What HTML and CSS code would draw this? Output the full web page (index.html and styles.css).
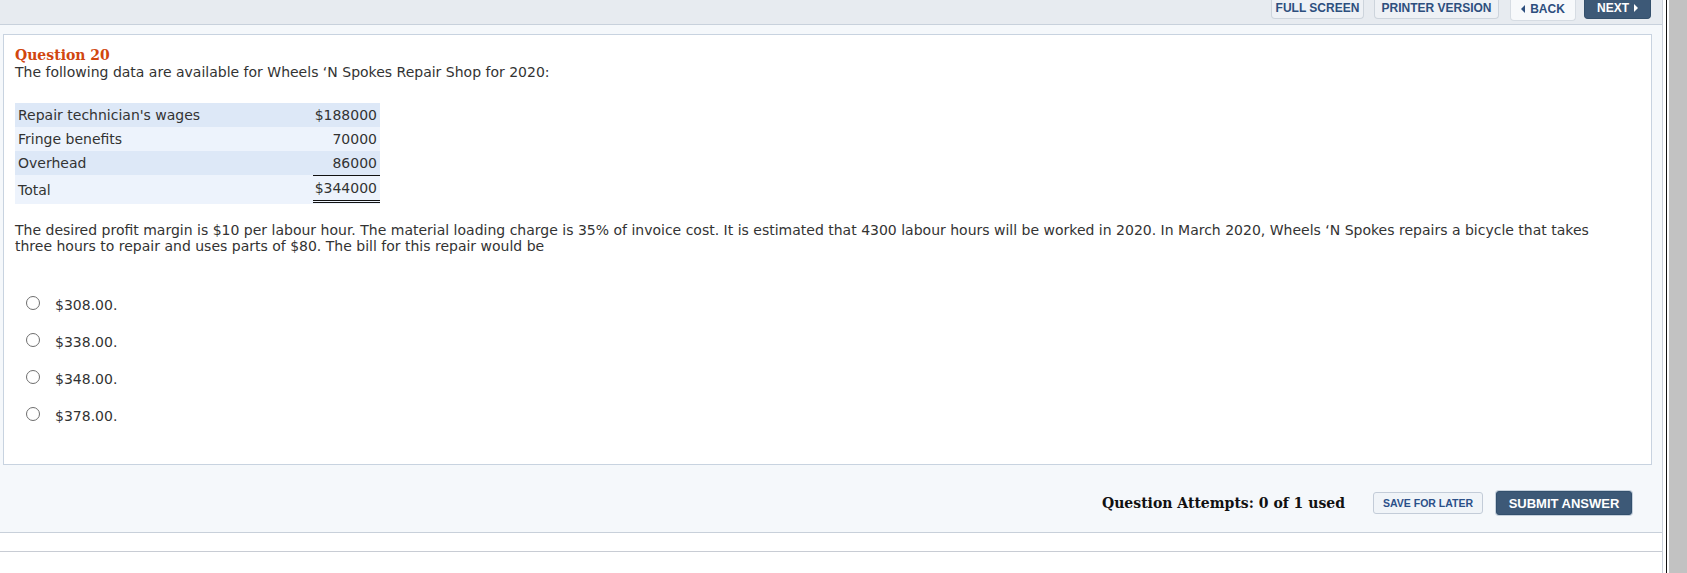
FILE: index.html
```html
<!DOCTYPE html>
<html lang="en">
<head>
<meta charset="utf-8">
<title>Question 20</title>
<link rel="stylesheet" href="styles.css">
</head>
<body>
<div class="page">
  <div class="main">
    <div class="topbar">
      <button class="tbtn full">FULL SCREEN</button>
      <button class="tbtn printer">PRINTER VERSION</button>
      <button class="tbtn back"><svg class="tri" width="4" height="8" viewBox="0 0 4 8"><path d="M4 0 L0 4 L4 8 Z" fill="#2d4f7e"/></svg>BACK</button>
      <button class="tbtn next">NEXT<svg class="tri" width="4" height="8" viewBox="0 0 4 8"><path d="M0 0 L4 4 L0 8 Z" fill="#ffffff"/></svg></button>
    </div>
    <div class="stage">
      <div class="panel">
        <h2 class="qtitle">Question 20</h2>
        <p class="intro">The following data are available for Wheels ‘N Spokes Repair Shop for 2020:</p>
        <table class="data">
          <tr class="odd"><td class="lbl">Repair technician's wages</td><td class="val">$188000</td></tr>
          <tr class="even"><td class="lbl">Fringe benefits</td><td class="val">70000</td></tr>
          <tr class="odd"><td class="lbl">Overhead</td><td class="val">86000</td></tr>
          <tr class="even total"><td class="lbl">Total</td><td class="val"><div class="sum">$344000</div></td></tr>
        </table>
        <p class="problem">The desired profit margin is $10 per labour hour. The material loading charge is 35% of invoice cost. It is estimated that 4300 labour hours will be worked in 2020. In March 2020, Wheels ‘N Spokes repairs a bicycle that takes three hours to repair and uses parts of $80. The bill for this repair would be</p>
        <ul class="options">
          <li class="opt"><span class="radio"></span><span class="otext">$308.00.</span></li>
          <li class="opt"><span class="radio"></span><span class="otext">$338.00.</span></li>
          <li class="opt"><span class="radio"></span><span class="otext">$348.00.</span></li>
          <li class="opt"><span class="radio"></span><span class="otext">$378.00.</span></li>
        </ul>
      </div>
    </div>
    <div class="footer">
      <span class="attempts">Question Attempts: 0 of 1 used</span>
      <button class="save">SAVE FOR LATER</button>
      <button class="submit">SUBMIT ANSWER</button>
    </div>
    <div class="strip"></div>
  </div>
  <div class="scroll"></div>
</div>
</body>
</html>
```
FILE: styles.css
```css
* { box-sizing: border-box; }
html, body { margin: 0; padding: 0; background: #ffffff; }
body {
  font-family: "DejaVu Sans", Verdana, sans-serif;
  font-size: 14px;
  color: #333333;
}
.page {
  display: flex;
  height: 573px;
  overflow: hidden;
}
.main {
  width: 1663px;
  border-right: 1px solid #c9d0da;
  display: flex;
  flex-direction: column;
}
.topbar {
  height: 25px;
  background: #e7ebf0;
  border-bottom: 1px solid #c8d1dc;
  display: flex;
  justify-content: flex-end;
  align-items: flex-start;
  padding-right: 11px;
}
.tbtn {
  font-family: "Liberation Sans", Arial, sans-serif;
  font-weight: bold;
  font-size: 12px;
  color: #2d4f7e;
  margin: -1px 0 0 0;
  height: 20px;
  line-height: 18px;
  padding: 0 0 2px 0;
  text-align: center;
  background: #eef1f5;
  border: 1px solid #cdd4dc;
  border-top: none;
  border-radius: 0 0 4px 4px;
  display: flex;
  align-items: center;
  justify-content: center;
  gap: 5px;
}
.full { width: 93px; }
.printer { width: 125px; margin-left: 10px; }
.back {
  width: 66px;
  margin-left: 11px;
  height: 22px;
  background: #f7f9fb;
  border-color: #d6dce3;
}
.next {
  width: 67px;
  margin-left: 8px;
  background: #3d5977;
  border-color: #34506c;
  color: #ffffff;
}
.tri { display: block; }
.stage {
  background: #f5f8fb;
  padding: 9px 10px 0 3px;
}
.panel {
  height: 431px;
  background: #ffffff;
  border: 1px solid #c8d3e0;
  padding: 12px 30px 0 11px;
}
.qtitle {
  margin: 0;
  font-family: "DejaVu Serif", Cambria, serif;
  font-weight: bold;
  font-size: 14px;
  line-height: 17px;
  color: #d1460e;
}
.intro {
  margin: 0;
  line-height: 16px;
}
.data {
  margin-top: 23px;
  border-collapse: collapse;
  width: 365px;
}
.data td {
  padding: 0 3px;
  height: 24px;
  vertical-align: middle;
  line-height: 16px;
}
.data td.lbl { width: 298px; }
.data td.val { width: 67px; text-align: right; padding-left: 0; }
.odd { background: #dde8f7; }
.even { background: #edf3fc; }
.total td { height: 29px; }
.total td.val { padding: 0 0 1px 0; vertical-align: top; }
.sum {
  border-top: 1px solid #111111;
  border-bottom: 3px double #111111;
  height: 28px;
  line-height: 24px;
  padding-right: 3px;
}
.problem {
  margin: 18px 0 0 0;
  line-height: 16px;
}
.options {
  list-style: none;
  margin: 32px 0 0 0;
  padding: 0 0 0 11px;
}
.opt {
  height: 37px;
  display: flex;
  align-items: center;
}
.radio {
  width: 14px;
  height: 14px;
  border: 1px solid #6e6e6e;
  border-radius: 50%;
  background: #ffffff;
  margin-top: -3px;
}
.otext {
  margin-left: 15px;
  line-height: 16px;
}
.footer {
  height: 68px;
  background: #f5f8fb;
  border-bottom: 1px solid #c8d0da;
  display: flex;
  justify-content: flex-end;
  align-items: flex-start;
  padding: 26px 30px 0 0;
}
.attempts {
  font-family: "DejaVu Serif", Cambria, serif;
  font-weight: bold;
  font-size: 14px;
  color: #111111;
  line-height: 24px;
  margin-right: 28px;
}
.save {
  margin-top: 1px;
  width: 110px;
  height: 22px;
  padding: 0;
  font-family: "Liberation Sans", Arial, sans-serif;
  font-weight: bold;
  font-size: 10.5px;
  color: #2b5089;
  background: #f0f4f8;
  border: 1px solid #c3ccd8;
  border-radius: 3px;
}
.submit {
  margin-left: 13px;
  width: 136px;
  height: 24px;
  padding: 0;
  font-family: "Liberation Sans", Arial, sans-serif;
  font-weight: bold;
  font-size: 13px;
  color: #ffffff;
  background: #3d5977;
  border: 1px solid #33506d;
  border-radius: 3px;
  box-shadow: 0 0 0 1px #c5d0dc;
}
.strip {
  height: 19px;
  border-bottom: 1px solid #c8ccd4;
}
.scroll {
  flex: 1;
  margin-left: 3px;
  border-left: 1px solid #111111;
  background: linear-gradient(to right, #ffffff 0, #ffffff 2px, #c2c2c2 2px);
}
```
